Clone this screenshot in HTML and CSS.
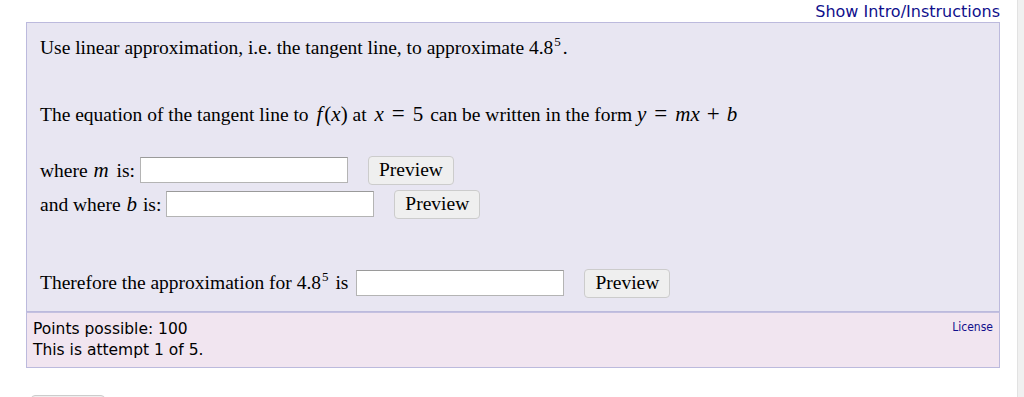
FILE: index.html
```html
<!DOCTYPE html>
<html lang="en">
<head>
<meta charset="utf-8">
<title>Question</title>
<link rel="stylesheet" href="styles.css">
</head>
<body>
<div class="page">
  <main class="main">
    <div class="topbar"><a class="intro-link" href="#">Show Intro/Instructions</a></div>
    <section class="question">
      <p class="q-line q-first">Use linear approximation, i.e. the tangent line, to approximate 4.8<sup class="sup">5</sup>.</p>
      <p class="q-line q-second">The equation of the tangent line to <span class="math math-fx"><i>f</i><span class="paren-l">(</span><i>x</i>)</span> at <span class="math math-eq1"><i>x</i><span class="op">=</span>5</span> can be written in the form <span class="math"><i>y</i><span class="op">=</span><i>m</i><i>x</i><span class="bin">+</span><i>b</i></span></p>
      <div class="row row-m">
        <span class="label">where <i class="mvar mvar-m">m</i> is:</span>
        <input class="answer" type="text" aria-label="m">
        <button class="preview" type="button">Preview</button>
      </div>
      <div class="row row-b">
        <span class="label">and where <i class="mvar">b</i> is:</span>
        <input class="answer" type="text" aria-label="b">
        <button class="preview" type="button">Preview</button>
      </div>
      <div class="row row-final">
        <span class="label label-final">Therefore the approximation for 4.8<sup class="sup">5</sup> is</span>
        <input class="answer" type="text" aria-label="approximation">
        <button class="preview" type="button">Preview</button>
      </div>
    </section>
    <footer class="info">
      <a class="license" href="#">License</a>
      <div class="info-line">Points possible: 100</div>
      <div class="info-line">This is attempt 1 of 5.</div>
    </footer>
    <button class="submit" type="button" aria-label="Submit"></button>
  </main>
  <div class="scrollbar"></div>
</div>
</body>
</html>
```
FILE: styles.css
```css
html, body {
  margin: 0;
  padding: 0;
  background: #ffffff;
  height: 100%;
  overflow: hidden;
}

.page {
  display: flex;
  height: 100%;
}

.main {
  flex: 1;
  padding: 0 17px 0 26px;
}

.scrollbar {
  width: 6px;
  background: #f0f0f0;
  border-left: 1px solid #e2e2e2;
}

.topbar {
  display: flex;
  justify-content: flex-end;
  height: 22px;
}

.intro-link {
  font-family: "DejaVu Sans", sans-serif;
  font-size: 16px;
  line-height: 22px;
  padding-top: 1px;
  color: #10108c;
  text-decoration: none;
}

.question {
  background: #e8e6f2;
  border: 1px solid #bcbadd;
  padding: 14px 13px 14px 13px;
  font-family: "Liberation Serif", "Times New Roman", serif;
  font-size: 19.5px;
  color: #000000;
}

.q-line {
  margin: 0;
  line-height: 22px;
}

.q-second {
  margin-top: 44px;
}

.sup {
  font-size: 13px;
  line-height: 0;
  vertical-align: 0;
  position: relative;
  top: -8px;
  margin: 0 2px 0 1px;
}

.math {
  font-family: "Liberation Serif", "Times New Roman", serif;
  font-size: 21px;
}

.math i, .mvar {
  font-style: italic;
  font-size: 21px;
}

.math-fx {
  margin-left: 3px;
}

.paren-l {
  margin-left: 2px;
}

.math-eq1 {
  margin-left: 3px;
  margin-right: 2px;
}

.op {
  font-size: 23px;
  margin: 0 8px;
}

.bin {
  font-size: 23px;
  margin: 0 7px;
}

.row {
  display: flex;
  align-items: center;
  height: 28px;
}

.row-m {
  margin-top: 30px;
}

.row-b {
  margin-top: 6px;
}

.row-final {
  margin-top: 51px;
}

.label {
  white-space: nowrap;
}

.mvar {
  margin: 0 1px;
}

.mvar-m {
  margin-right: 3px;
}

.label-final {
  padding-right: 3px;
}

.answer {
  box-sizing: border-box;
  width: 208px;
  height: 26px;
  margin: 0 0 0 5px;
  border: 1px solid #b4b4b4;
  border-top-color: #9a9a9a;
  background: #ffffff;
  padding: 0 4px;
  font-size: 16px;
}

.preview {
  box-sizing: border-box;
  height: 29px;
  margin-left: 20px;
  padding: 0 10px;
  background: #efefef;
  border: 1px solid #cccccc;
  border-radius: 4px;
  font-family: "Liberation Serif", "Times New Roman", serif;
  font-size: 19.5px;
  color: #000000;
}

.info {
  background: #f1e5f0;
  border: 1px solid #bcbadd;
  border-top: 1px solid #c4c0e0;
  padding: 6px 6px 6px 6px;
  font-family: "DejaVu Sans", sans-serif;
  font-size: 15.5px;
  color: #000000;
}

.info-line {
  line-height: 21px;
}

.license {
  float: right;
  font-family: "DejaVu Sans Condensed", "DejaVu Sans", sans-serif;
  font-size: 12px;
  line-height: 16px;
  margin-top: 0;
  color: #10108c;
  text-decoration: none;
}

.submit {
  display: block;
  margin: 27px 0 0 5px;
  width: 74px;
  height: 28px;
  background: #efefef;
  border: 1px solid #cccccc;
  border-radius: 4px;
}
```
